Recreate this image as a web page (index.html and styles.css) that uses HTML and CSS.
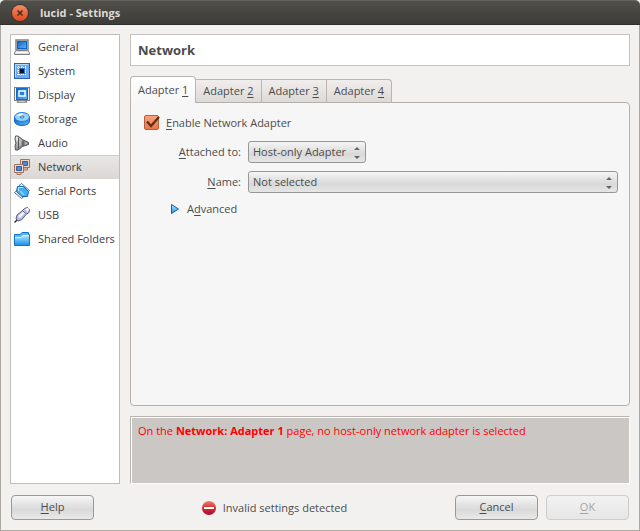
FILE: index.html
```html
<!DOCTYPE html>
<html lang="en">
<head>
	<meta charset="utf-8">
	<title>lucid - Settings</title>
	<link rel="stylesheet" href="styles.css">
</head>
<body>

<header class="titlebar">
	<button class="close" aria-label="Close">
		<svg width="16" height="16" viewBox="0 0 16 16"><path d="M5.5 5.5l5 5m0-5l-5 5" stroke="#49281c" stroke-width="1.5"/></svg>
	</button>
	<h1 class="title">lucid - Settings</h1>
</header>

<div class="window">
	<svg width="0" height="0" class="defs">
		<defs>
			<linearGradient id="blue" x1="0" y1="0" x2="1" y2="1"><stop offset="0" stop-color="#0a5fc4"/><stop offset="1" stop-color="#5bb8fa"/></linearGradient>
			<linearGradient id="sky" x1="0" y1="0" x2="0" y2="1"><stop offset="0" stop-color="#b4ebff"/><stop offset="1" stop-color="#1d91ea"/></linearGradient>
			<linearGradient id="metal" x1="0" y1="0" x2="1" y2="1"><stop offset="0" stop-color="#eee"/><stop offset=".5" stop-color="#999"/><stop offset="1" stop-color="#4a4a4a"/></linearGradient>
			<linearGradient id="red" x1="0" y1="0" x2="0" y2="1"><stop offset="0" stop-color="#ee8070"/><stop offset=".5" stop-color="#d42c30"/><stop offset="1" stop-color="#a80d36"/></linearGradient>
		</defs>
	</svg>

	<div class="main">
		<nav class="sidebar">
			<button class="item">
				<svg width="16" height="16" viewBox="0 0 16 16"><rect x="2" y="1" width="12" height="10" fill="#f4f6f8" stroke="#808080" stroke-width="1.500"/><rect x="3.500" y="2.500" width="9" height="7" fill="url(#blue)" stroke="#0f62bd"/><path d="M2.500 11.500h11l2 2v2H.5v-2z" fill="#ddd" stroke="#808080"/><path d="M2 13.500h12" stroke="#fff"/></svg>
				General
			</button>
			<button class="item">
				<svg width="16" height="16" viewBox="0 0 16 16"><rect x=".5" y=".5" width="15" height="15" fill="#6eaaf4" stroke="#2f62ae"/><path d="M1.500 14V1.500H14" fill="none" stroke="#b7d9ff"/><path d="M3 4.500h10M3 11.500h10M3 8h10M4.500 3v10M8 3v10M11.500 3v10" stroke="#fff" stroke-dasharray="1 1"/><rect x="5" y="5" width="6" height="6" fill="#2775d8"/><rect x="6" y="6" width="4" height="4" fill="#05182c"/></svg>
				System
			</button>
			<button class="item">
				<svg width="16" height="16" viewBox="0 0 16 16"><rect x=".5" y=".5" width="15" height="13" fill="#f2f2f2" stroke="#808080"/><rect x="2.500" y="1.500" width="11" height="11" fill="url(#blue)" stroke="#126bcb"/><path d="M5 4h6v5H5z" fill="#2183df" stroke="#fff" stroke-width="1.500"/><path d="M5 13.500h6v1h2v1H3v-1h2z" fill="#ccc" stroke="#808080" stroke-width=".7"/></svg>
				Display
			</button>
			<button class="item">
				<svg width="16" height="16" viewBox="0 0 16 16"><path d="M.5 6v4c0 6 15 6 15 0V6z" fill="url(#blue)" stroke="#1763bd"/><ellipse cx="8" cy="6" rx="7.500" ry="4.500" fill="#93d4ff" stroke="#2b7bd1"/><path d="M3 5c1-2 4-3 6-3L8 5z" fill="#e7f8ff"/><ellipse cx="8" cy="6" rx="2" ry="1" fill="#d7efff" stroke="#2474c8"/></svg>
				Storage
			</button>
			<button class="item">
				<svg width="16" height="16" viewBox="0 0 16 16"><path d="M1.500 1h2.500L8.500 4.500l6 3v2l-6 2L4 15H1.500L1 11l1-3-1-3z" fill="url(#metal)" stroke="#555"/><path d="M4.500 2.500v11" stroke="#555"/><path d="M6 5v6" stroke="#ccc"/><path d="M9 5.500v5" stroke="#444"/><path d="M11 7l3 1.500L11 10z" fill="#bbb"/><path d="M2.500 2.500l1 3" stroke="#fff"/></svg>
				Audio
			</button>
			<button class="item selected">
				<svg width="16" height="16" viewBox="0 0 16 16"><path d="M6.500.5h9v8h-9zM9.500 9h4v2h-4" fill="#f2d5c9" stroke="#a4705f"/><path d="M8.500 2.500h5v4h-5z" fill="#5089c8" stroke="#355e9a"/><path d="M.5 5.500h9v8h-9zM3 13.500h4v2H3z" fill="#f2d5c9" stroke="#a4705f"/><path d="M2.500 7.500h5v4h-5z" fill="#5089c8" stroke="#355e9a"/></svg>
				Network
			</button>
			<button class="item">
				<svg width="16" height="16" viewBox="0 0 16 16"><path d="M5 2.500L7.500.5l8 7-2.500 2zM.5 9.500L3 7.500l7 6-2.500 2z" fill="#e8f6ff" stroke="#44749f"/><path d="M3.500 3.500h6l5 5-1 5H8l-5.500-5z" fill="#41adef" stroke="#1765ae"/><path d="M4.500 8V4.500h4.500" fill="none" stroke="#b5eaff"/><path d="M6 8l4 4" stroke="#7ccffc" stroke-width="2"/></svg>
				Serial Ports
			</button>
			<button class="item">
				<svg width="16" height="16" viewBox="0 0 16 16"><path d="M10.500 1.500l3-1 2 2-.5 3-3 2-4 5-4 1.500-2-2 1-4 5-4z" fill="#b7bbe8" stroke="#5c5d80"/><path d="M4 9l5-4 2 1-5 5z" fill="#f6f7ff"/><path d="M11 2l3-1 1 1-1 3z" fill="#fff"/><path d="M9 4l3.500 3.500" stroke="#77789f"/><path d="M3 13L.5 15.500" stroke="#333" stroke-width="1.500"/></svg>
				USB
			</button>
			<button class="item">
				<svg width="16" height="16" viewBox="0 0 16 16"><path d="M.5 14.500v-11h5.500V3.500l2-2h6.500v2h1v11z" fill="#58b5f2" stroke="#1473c4"/><path d="M1 6h6l2-2h6v10H1z" fill="url(#sky)"/><path d="M1 6.500h6l2-2h6" fill="none" stroke="#d7f6ff"/></svg>
				Shared Folders
			</button>
		</nav>

		<main class="content">
			<h2 class="heading">Network</h2>

			<div class="tabs" role="tablist">
				<button class="tab active" role="tab" aria-selected="true">Adapter <u>1</u></button>
				<button class="tab" role="tab">Adapter <u>2</u></button>
				<button class="tab" role="tab">Adapter <u>3</u></button>
				<button class="tab" role="tab">Adapter <u>4</u></button>
			</div>

			<form class="pane" id="adapter_form">
				<div class="enable">
					<span class="check">
						<input type="checkbox" id="enable" checked>
						<svg width="16" height="16" viewBox="0 0 16 16"><path d="M3 6.500l4 4.500L15 2" fill="none" stroke="#5b2d1c" stroke-width="2.200"/></svg>
					</span>
					<label for="enable"><u>E</u>nable Network Adapter</label>
				</div>
				<div class="fields">
					<label for="attached"><u>A</u>ttached to:</label>
					<span class="combo short">
						<select id="attached"><option>Host-only Adapter</option></select>
						<svg width="6" height="12" viewBox="0 0 6 12"><path d="M0 3l3-3 3 3zM0 9l3 3 3-3z" fill="#666"/></svg>
					</span>
					<label for="name"><u>N</u>ame:</label>
					<span class="combo">
						<select id="name"><option>Not selected</option></select>
						<svg width="6" height="12" viewBox="0 0 6 12"><path d="M0 3l3-3 3 3zM0 9l3 3 3-3z" fill="#666"/></svg>
					</span>
				</div>
				<button type="button" class="advanced">
					<svg width="9" height="10" viewBox="0 0 9 10"><path d="M1.500 .5l7 4.500-7 4.500z" fill="url(#sky)" stroke="#1e5b99"/></svg>
					<span>A<u>d</u>vanced</span>
				</button>
			</form>

			<div class="message">On the <b>Network: Adapter 1</b> page, no host-only network adapter is selected</div>
		</main>
	</div>

	<footer class="footer">
		<button class="button"><span><u>H</u>elp</span></button>
		<div class="status">
			<svg width="14" height="14" viewBox="0 0 14 14"><circle cx="7" cy="7" r="7" fill="url(#red)"/><path d="M2 7h10" stroke="#fff" stroke-width="2"/></svg>
			Invalid settings detected
		</div>
		<button class="button"><span><u>C</u>ancel</span></button>
		<button class="button" disabled><span><u>O</u>K</span></button>
	</footer>
</div>

</body>
</html>
```
FILE: styles.css
```css
* {
	box-sizing: border-box;
}

body {
	margin: 0;
	min-height: 100vh;
	display: flex;
	flex-direction: column;
	background-color: #f2f1f0;
	color: #4c4c4c;
	font: 11px/16px "Open Sans", "Noto Sans", sans-serif;
}

button,
select {
	margin: 0;
	padding: 0;
	border: 0;
	background: none;
	color: inherit;
	font: inherit;
}

svg {
	flex: none;
}

u {
	text-underline-offset: 2px;
	text-decoration-thickness: 1px;
	text-decoration-skip-ink: none;
}

.defs {
	position: absolute;
}

.titlebar {
	display: flex;
	align-items: center;
	gap: 12px;
	height: 25px;
	padding-left: 12px;
	border-top: 1px solid #64635e;
	border-bottom: 1px solid #302f2c;
	border-radius: 5px 5px 0 0;
	background: linear-gradient(#504f4a, #3d3c38);
	color: #dfdbd2;
}

.title {
	margin: 0;
	font-size: 11px;
	font-weight: bold;
}

.close {
	width: 16px;
	height: 16px;
	border-radius: 50%;
	background: linear-gradient(#f58a64, #df4a1d);
	box-shadow: 0 0 0 1px #33322e;
}

.close svg {
	display: block;
	fill: none;
}

.window {
	flex: 1;
	display: flex;
	flex-direction: column;
	padding: 9px 9px 10px;
	border: 1px solid #aca8a3;
	border-top: 0;
}

.main {
	flex: 1;
	display: flex;
	gap: 10px;
}

.sidebar {
	width: 110px;
	border: 1px solid #c0bcb8;
	background-color: #fff;
}

.item {
	display: flex;
	align-items: center;
	gap: 8px;
	width: 100%;
	height: 24px;
	padding-left: 3px;
	color: #3c3c3c;
	white-space: nowrap;
}

.item.selected {
	background: linear-gradient(#e9e7e5, #dad7d4);
	box-shadow: inset 0 1px #d0ccc9;
}

.content {
	flex: 1;
	display: flex;
	flex-direction: column;
	min-width: 0;
}

.heading {
	margin: 0 0 10px;
	padding: 7px;
	border: 1px solid #c4c1be;
	background-color: #fff;
	font-size: 13px;
	line-height: 16px;
}

.tabs {
	display: flex;
	align-items: flex-end;
}

.tab {
	height: 23px;
	padding: 0 7px;
	border: 1px solid #bab5b0;
	border-left: 0;
	border-bottom: 0;
	background: linear-gradient(#f0eeed, #ddd9d6);
}

.tab:last-child {
	border-top-right-radius: 4px;
}

.tab.active {
	position: relative;
	height: 27px;
	margin-bottom: -1px;
	border-left: 1px solid #bab5b0;
	border-radius: 4px 4px 0 0;
	background: linear-gradient(#fff, #f6f6f6);
}

.pane {
	flex: 1;
	display: flex;
	flex-direction: column;
	align-items: flex-start;
	padding: 12px 11px 12px 13px;
	border: 1px solid #b5b0ab;
	border-radius: 0 4px 4px 4px;
	background-color: #f6f6f6;
}

.enable {
	display: flex;
	gap: 6px;
	margin-bottom: 10px;
}

.check {
	position: relative;
	width: 16px;
	height: 16px;
}

.check input {
	appearance: none;
	display: block;
	width: 15px;
	height: 15px;
	margin: 0;
	border: 1px solid #b0603f;
	border-radius: 2px;
	background: linear-gradient(#f9a27c, #ef7446);
}

.check svg {
	position: absolute;
	top: 0;
	left: 0;
	pointer-events: none;
}

.check input:not(:checked) + svg {
	display: none;
}

.fields {
	display: grid;
	grid-template-columns: 97px 1fr;
	align-items: center;
	gap: 8px 7px;
	width: 100%;
	margin-bottom: 8px;
}

.fields label {
	text-align: right;
}

.combo {
	position: relative;
}

.combo.short {
	width: 118px;
}

.combo select {
	appearance: none;
	display: block;
	width: 100%;
	height: 22px;
	padding: 0 16px 0 4px;
	border: 1px solid #979797;
	border-radius: 3px;
	background: linear-gradient(#f5f5f5, #d9d9d9 60%, #e6e6e6);
}

.combo svg {
	position: absolute;
	top: 6px;
	right: 6px;
	pointer-events: none;
}

.advanced {
	display: flex;
	align-items: center;
	gap: 8px;
	margin-left: 26px;
}

.message {
	height: 68px;
	margin-top: 10px;
	padding: 6px 7px;
	border: 1px solid #fff;
	border-top-color: #bab5b0;
	border-left-color: #bab5b0;
	background-color: #cbc7c4;
	box-shadow: inset 1px 1px #fff;
	color: #f00;
}

.footer {
	display: flex;
	align-items: center;
	gap: 8px;
	padding: 11px 1px 0;
}

.button {
	width: 83px;
	height: 25px;
	padding-bottom: 2px;
	border: 1px solid #999;
	border-radius: 4px;
	background: linear-gradient(#f6f6f6, #d9d9d9 60%, #e9e9e9);
}

.button:disabled {
	border-color: #cfcdcb;
	background: linear-gradient(#f2f2f2, #e6e6e6);
	color: #a5a4a3;
}

.status {
	flex: 1;
	display: flex;
	align-items: center;
	justify-content: center;
	gap: 7px;
}
```
